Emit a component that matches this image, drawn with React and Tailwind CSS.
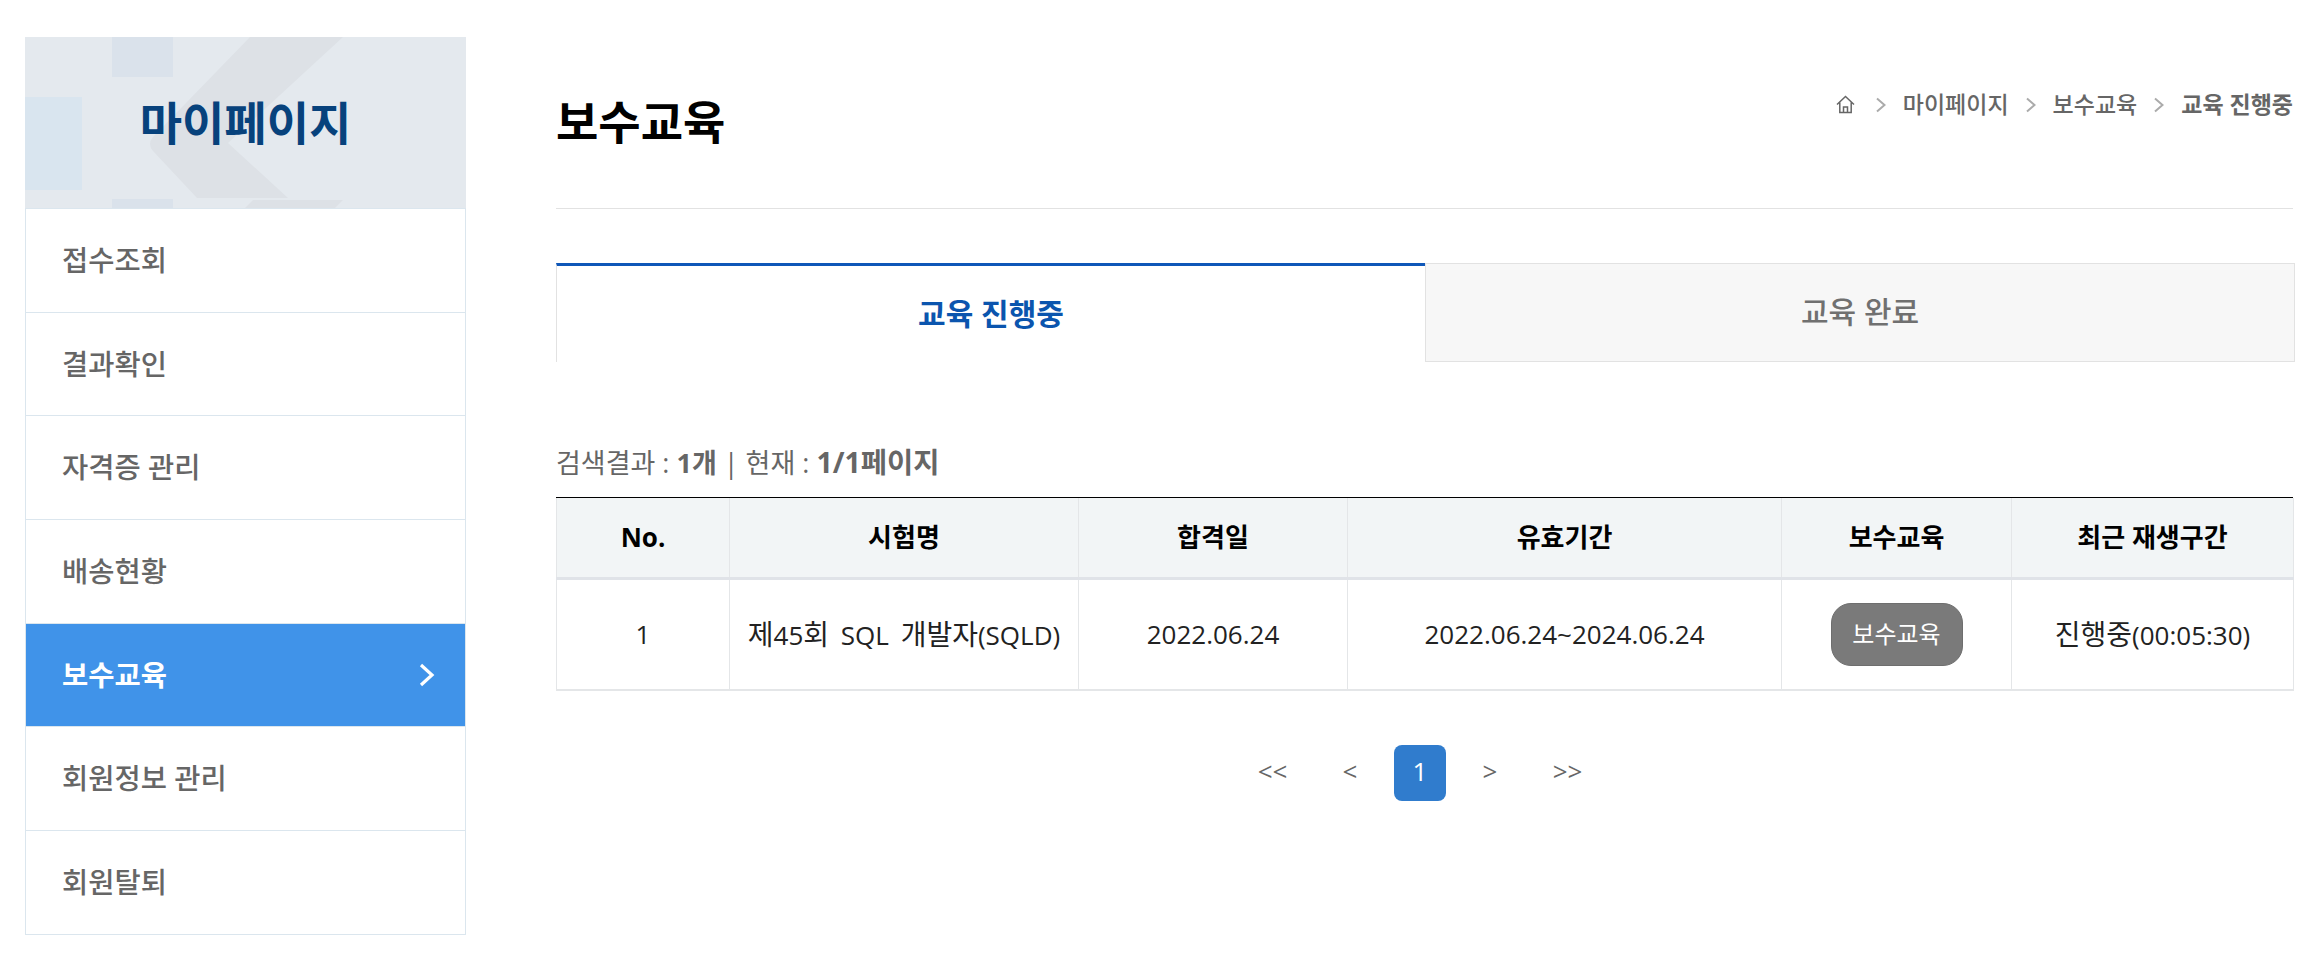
import React from "react";

const font = "font-['Open_Sans','Noto_Sans_CJK_KR',sans-serif]";

const menus = ["접수조회", "결과확인", "자격증 관리", "배송현황", "보수교육", "회원정보 관리", "회원탈퇴"];

const Sidebar = () => {
  return (
    <aside className="w-[441px] shrink-0">
      <div className="relative h-[171px] overflow-hidden bg-[#e4e9ee] flex items-center justify-center">
        <svg className="absolute left-0 top-0" width="441" height="171" viewBox="0 0 441 171">
          <rect x="87" y="0" width="61" height="40" fill="#dae2eb" />
          <rect x="0" y="60" width="57" height="93" fill="#d9e5ef" />
          <rect x="87" y="162" width="61" height="9" fill="#dae2eb" />
          <path d="M225 0 L128 100 Q122 107 128 114 L172 161 L263 161 L203 106 L318 0 Z" fill="#dde1e6" />
          <path d="M228 163 L220 171 L310 171 L318 163 Z" fill="#dde1e6" />
        </svg>
        <h2 className="relative text-[46px] leading-none font-bold text-[#07427c] -mt-[2px]">마이페이지</h2>
      </div>
      <ul className="border-x-[1px] border-b-[1px] border-[#dbe6ee]">
        {menus.map((m) => {
          const active = m === "보수교육";
          return (
            <li
              key={m}
              className={`h-[103.7px] border-t-[1px] border-[#dbe6ee] flex items-center justify-between pl-[36px] pr-[30px] text-[28.5px] ${
                active ? "bg-[#4093e9] text-white font-bold" : "bg-white text-[#666666] font-medium"
              }`}
            >
              <span>{m}</span>
              {active && (
                <svg width="16" height="24" viewBox="0 0 16 24" fill="none" stroke="white" strokeWidth="3.2">
                  <path d="M2 2 L13 12 L2 22" />
                </svg>
              )}
            </li>
          );
        })}
      </ul>
    </aside>
  );
};

const Crumb = () => (
  <svg width="10" height="16" viewBox="0 0 10 16" fill="none" stroke="#ababab" strokeWidth="2">
    <path d="M1 1.5 L8.5 8 L1 14.5" />
  </svg>
);

const Breadcrumb = () => (
  <div className="self-start flex items-center gap-[17px] text-[23px] leading-none text-[#666666] mt-[56px] font-medium">
    <svg className="mr-[4px]" width="19" height="19" viewBox="0 0 19 19" fill="none" stroke="#666666" strokeWidth="1.5">
      <path d="M1 9.5 L9.5 1.5 L18 9.5 M3.8 7.5 V17.5 H15.2 V7.5 M7.5 17.5 V12 H11.5 V17.5" />
    </svg>
    <Crumb />
    <span>마이페이지</span>
    <Crumb />
    <span>보수교육</span>
    <Crumb />
    <span className="font-bold">교육 진행중</span>
  </div>
);

const columns = [
  { label: "No.", w: "w-[173px]" },
  { label: "시험명", w: "w-[349px]" },
  { label: "합격일", w: "w-[269px]" },
  { label: "유효기간", w: "w-[434px]" },
  { label: "보수교육", w: "w-[230px]" },
  { label: "최근 재생구간", w: "w-[282px]" },
];

const Hg = ({ children }) => <span className="text-[28px]">{children}</span>;

const ResultTable = () => (
  <div className="w-[1737px] border-t-[1px] border-black">
    <table className="w-full table-fixed border-collapse">
      <thead>
        <tr className="h-[80px] bg-[#f2f5f6] border-b-[3px] border-b-[#e0e3e8]">
          {columns.map((c) => (
            <th key={c.label} className={`${c.w} border-x-[1px] border-[#e4e6e8] text-[26px] font-bold text-black`}>
              {c.label}
            </th>
          ))}
        </tr>
      </thead>
      <tbody>
        <tr className="h-[112px] text-[26px] text-[#222222] text-center border-b-[2px] border-[#e4e6e8]">
          <td className="border-x-[1px] border-[#e4e6e8]">1</td>
          <td className="border-x-[1px] border-[#e4e6e8] whitespace-nowrap [word-spacing:5px]">
            <Hg>제</Hg>45<Hg>회</Hg> SQL <Hg>개발자</Hg>(SQLD)
          </td>
          <td className="border-x-[1px] border-[#e4e6e8]">2022.06.24</td>
          <td className="border-x-[1px] border-[#e4e6e8]">2022.06.24~2024.06.24</td>
          <td className="border-x-[1px] border-[#e4e6e8]">
            <button className="w-[132px] h-[63px] rounded-[20px] bg-[#7a7a7a] border-[1px] border-[#6e6e6e] text-white text-[24px]">
              보수교육
            </button>
          </td>
          <td className="border-x-[1px] border-[#e4e6e8] whitespace-nowrap">
            <Hg>진행중</Hg>(00:05:30)
          </td>
        </tr>
      </tbody>
    </table>
  </div>
);

const Pagination = () => (
  <div className="flex items-center justify-center mt-[54px] pr-[11px] text-[26px] text-[#666666]">
    <span className="w-[77px] pb-[3px] text-center">&lt;&lt;</span>
    <span className="w-[78px] pb-[3px] text-center">&lt;</span>
    <span className="w-[52px] h-[56px] pb-[3px] mx-[5px] rounded-[8px] bg-[#307ccd] text-white flex items-center justify-center">1</span>
    <span className="w-[78px] pb-[3px] text-center">&gt;</span>
    <span className="w-[77px] pb-[3px] text-center">&gt;&gt;</span>
  </div>
);

export default function App() {
  return (
    <div className={`${font} min-h-screen bg-white flex pl-[25px] pt-[37px]`}>
      <Sidebar />
      <main className="ml-[90px] w-[1739px]">
        <div className="w-[1737px] h-[172px] border-b-[1px] border-[#e2e2e2] flex justify-between">
          <h1 className="text-[46px] font-bold text-black mt-[51px] leading-[66px]">보수교육</h1>
          <Breadcrumb />
        </div>
        <div className="flex mt-[54px] h-[99px] text-[30px]">
          <div className="w-[869px] pb-[2px] bg-white border-t-[3px] border-t-[#0f57b8] border-l-[1px] border-l-[#e2e2e2] flex items-center justify-center font-bold text-[#0b55ae]">
            교육 진행중
          </div>
          <div className="flex-1 pb-[2px] bg-[#f7f7f7] border-[1px] border-[#e2e2e2] flex items-center justify-center text-[#707070] font-medium">
            교육 완료
          </div>
        </div>
        <p className="mt-[83px] mb-[17px] text-[27px] leading-[34px] text-[#666666]">
          검색결과 : <b>1개</b> | 현재 : <b className="text-[28.5px]">1/1페이지</b>
        </p>
        <ResultTable />
        <Pagination />
      </main>
    </div>
  );
}
